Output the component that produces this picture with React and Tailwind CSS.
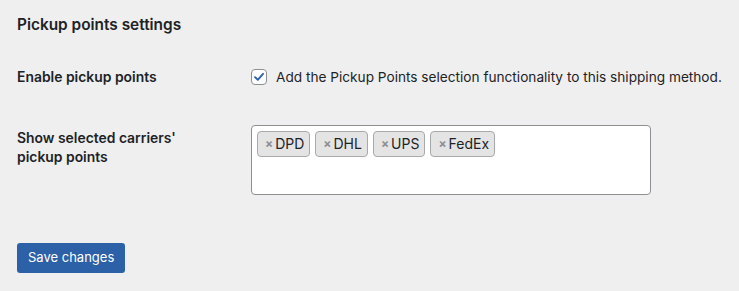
import React from "react";

function Tag({ label }) {
  return (
    <span className="flex h-[26px] items-center rounded-[4px] border border-[#a7aaad] bg-[#e4e4e4] pl-[7px] pr-[5px] text-[14px] text-[#1d2327]">
      <span className="mr-[2px] text-[12px] font-bold leading-none text-[#8c8f94]">×</span>
      {label}
    </span>
  );
}

export default function App() {
  return (
    <div
      className="h-[291px] w-[739px] bg-[#efefef] text-[#1d2327]"
      style={{ fontFamily: "Inter, 'Noto Sans', sans-serif" }}
    >
      <div className="px-[17px] pt-[14px]">
        <h2 className="text-[15.4px] font-semibold leading-[22px]">Pickup points settings</h2>
        <div className="mt-[31px] flex items-center">
          <div className="w-[234px] text-[13.9px] font-semibold">Enable pickup points</div>
          <label className="flex items-center gap-[9px] text-[13.65px]">
            <span className="flex h-[16px] w-[16px] items-center justify-center rounded-[4px] border border-[#8c8f94] bg-white">
              <svg viewBox="0 0 16 16" className="h-[14px] w-[14px]">
                <path d="M3.5 8.2 L6.6 11.2 L12.6 4.4" fill="none" stroke="#2c62b0" strokeWidth="2.2" strokeLinecap="round" strokeLinejoin="round" />
              </svg>
            </span>
            Add the Pickup Points selection functionality to this shipping method.
          </label>
        </div>
        <div className="mt-[37px] flex">
          <div className="w-[234px] pt-[4px] text-[13.9px] font-semibold leading-[19px]">
            Show selected carriers'
            <br />
            pickup points
          </div>
          <div className="h-[70px] w-[400px] rounded-[4px] border border-[#8c8f94] bg-white px-[5px] pt-[5px]">
            <div className="flex gap-[5px]">
              <Tag label="DPD" />
              <Tag label="DHL" />
              <Tag label="UPS" />
              <Tag label="FedEx" />
            </div>
          </div>
        </div>
        <button className="mt-[48px] h-[30px] rounded-[3px] bg-[#2c61a7] px-[11px] text-[13px] text-white">
          Save changes
        </button>
      </div>
    </div>
  );
}
